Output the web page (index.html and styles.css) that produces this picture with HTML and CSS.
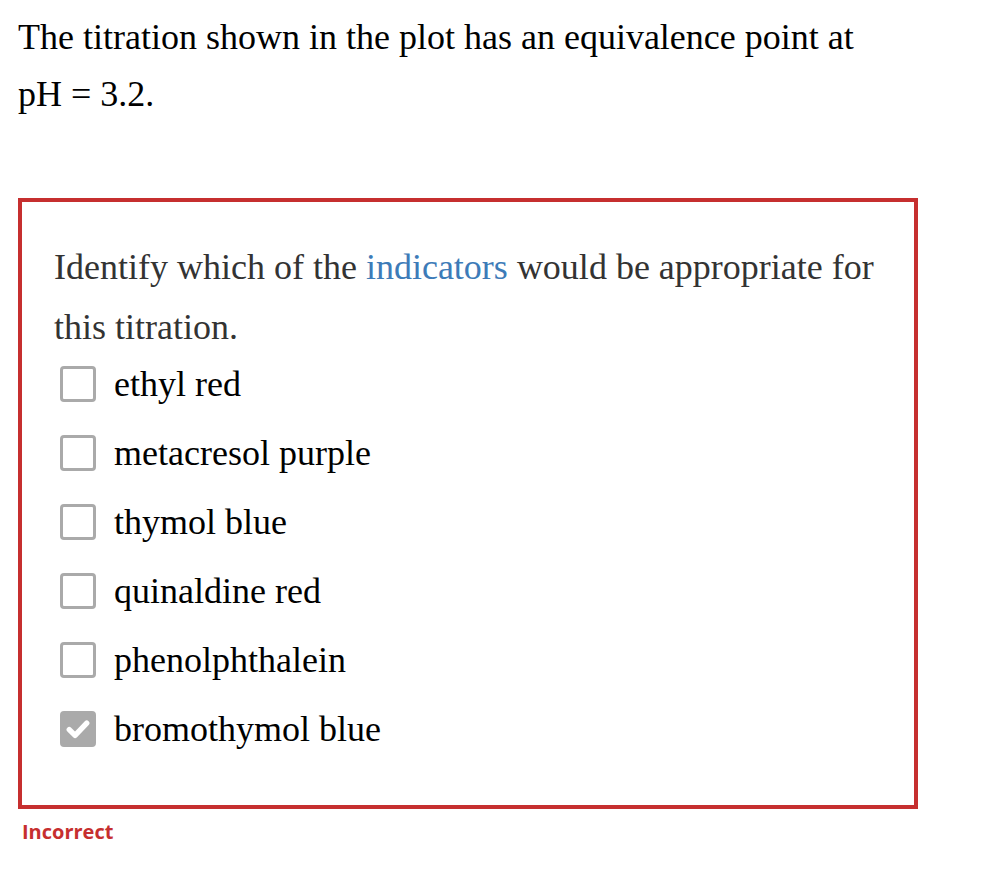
FILE: index.html
```html
<!DOCTYPE html>
<html lang="en">

<head>
    <meta charset="UTF-8">
    <meta name="viewport" content="width=device-width, initial-scale=1.0">
    <title>Titration Indicators</title>
    <link rel="stylesheet" href="styles.css">
</head>

<body>
    <div id="container">
        <p class="intro">The titration shown in the plot has an equivalence point at pH&nbsp;=&nbsp;3.2.</p>

        <div class="question">
            <p class="prompt">Identify which of the <a href="#" class="term">indicators</a> would be appropriate for this titration.</p>
            <ul class="choices">
                <li><span class="box"></span>ethyl red</li>
                <li><span class="box"></span>metacresol purple</li>
                <li><span class="box"></span>thymol blue</li>
                <li><span class="box"></span>quinaldine red</li>
                <li><span class="box"></span>phenolphthalein</li>
                <li><span class="box checked"><svg viewBox="0 0 24 24" width="28" height="28"><path d="M4.5 12.5 L9.5 17.5 L19.5 7" fill="none" stroke="#fff" stroke-width="4.6" stroke-linecap="round" stroke-linejoin="round"/></svg></span>bromothymol blue</li>
            </ul>
        </div>

        <div class="feedback">Incorrect</div>
    </div>
</body>

</html>
```

FILE: styles.css
```css
body {
    margin: 0;
    background: #fff;
    font-family: "Liberation Serif", "Times New Roman", serif;
}

#container {
    padding: 0 18px;
    width: 900px;
}

.intro {
    margin: 9px 0 0;
    font-size: 36px;
    line-height: 57px;
    color: #000;
    width: 860px;
}

.question {
    margin-top: 75px;
    border: 4px solid #c62f2f;
    padding: 35px 10px 42px 32px;
}

.prompt {
    margin: 0;
    font-size: 36px;
    line-height: 60px;
    color: #333;
}

.term {
    color: #3d7bb8;
    text-decoration: none;
}

.choices {
    list-style: none;
    margin: -8px 0 0;
    padding: 0;
}

.choices li {
    display: flex;
    align-items: center;
    height: 69px;
    font-size: 36px;
    color: #000;
}

.box {
    box-sizing: border-box;
    width: 36px;
    height: 36px;
    margin: 0 18px 0 6px;
    border: 3px solid #aaa;
    border-radius: 4px;
    display: flex;
    align-items: center;
    justify-content: center;
}

.box.checked {
    background: #aaa;
}

.feedback {
    margin: 9px 0 0 4px;
    font-family: "Open Sans", sans-serif;
    font-weight: bold;
    font-size: 20px;
    color: #c62f2f;
}
```
